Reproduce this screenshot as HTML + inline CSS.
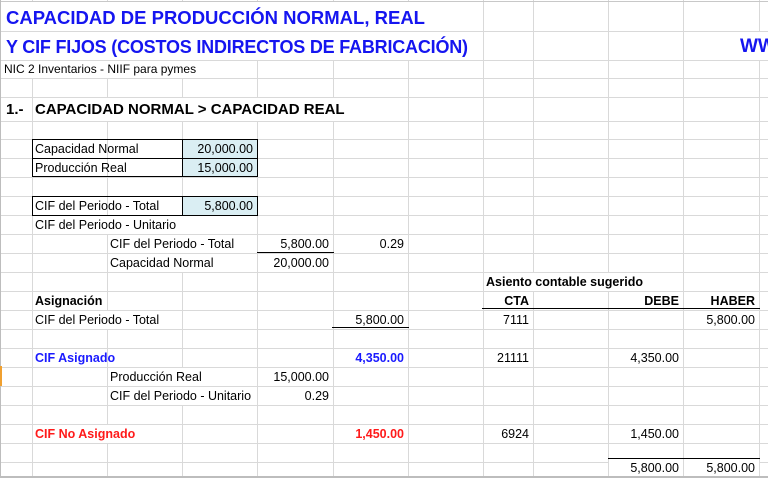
<!DOCTYPE html>
<html><head><meta charset="utf-8"><style>
*{margin:0;padding:0;box-sizing:border-box}
body{width:768px;height:478px;overflow:hidden;background:#fff;position:relative;font-family:"Liberation Sans",sans-serif;font-size:12.5px;color:#000}
.v{position:absolute;top:0;width:1px;height:478px;background:#d9d9d9}
.h{position:absolute;left:0;height:1px;width:768px;background:#d9d9d9}
.t{position:absolute;height:18px;line-height:19px;white-space:nowrap;padding:0 2px;background:#fff}
.r{text-align:right;padding-right:4px}
.b{font-weight:bold}
.k{position:absolute;background:#000}
</style></head><body>
<div class="v" style="left:32px"></div><div class="v" style="left:107px"></div><div class="v" style="left:182px"></div><div class="v" style="left:257px"></div><div class="v" style="left:333px"></div><div class="v" style="left:408px"></div><div class="v" style="left:483px"></div><div class="v" style="left:533px"></div><div class="v" style="left:608px"></div><div class="v" style="left:683px"></div><div class="v" style="left:759px"></div>
<div class="h" style="top:1px;background:#c8c8c8"></div>
<div class="h" style="top:31px"></div><div class="h" style="top:60px"></div><div class="h" style="top:78px"></div><div class="h" style="top:97px"></div><div class="h" style="top:121px"></div>
<div class="h" style="top:139px"></div><div class="h" style="top:158px"></div><div class="h" style="top:177px"></div><div class="h" style="top:196px"></div><div class="h" style="top:215px"></div><div class="h" style="top:234px"></div><div class="h" style="top:253px"></div><div class="h" style="top:272px"></div><div class="h" style="top:291px"></div><div class="h" style="top:310px"></div><div class="h" style="top:329px"></div><div class="h" style="top:348px"></div><div class="h" style="top:367px"></div><div class="h" style="top:386px"></div><div class="h" style="top:405px"></div><div class="h" style="top:424px"></div><div class="h" style="top:443px"></div><div class="h" style="top:462px"></div>
<div class="h" style="top:476px;height:2px;background:#bdbdbd"></div>
<div style="position:absolute;left:0;top:0;width:1px;height:478px;background:#bdbdbd"></div>
<div style="position:absolute;left:0;top:366px;width:2px;height:20px;background:#f0a030"></div>

<div class="t b" style="left:1px;top:2px;width:481px;height:29px;line-height:32px;font-size:18.5px;padding-left:5px;color:#1515f0">CAPACIDAD DE PRODUCCIÓN NORMAL, REAL</div>
<div class="t b" style="left:1px;top:32px;width:481px;height:28px;line-height:30px;font-size:18px;letter-spacing:-0.2px;padding-left:5px;color:#1515f0">Y CIF FIJOS (COSTOS INDIRECTOS DE FABRICACIÓN)</div>
<div class="t b" style="left:738px;top:32px;width:30px;height:28px;line-height:30px;font-size:19px;color:#1515f0">WW</div>
<div class="t" style="left:1px;top:61px;width:256px;height:17px;line-height:17px;font-size:12px;padding-left:3px">NIC 2 Inventarios - NIIF para pymes</div>
<div class="t b" style="left:1px;top:98px;width:31px;height:23px;line-height:24px;font-size:15px;padding-left:5px">1.-</div>
<div class="t b" style="left:33px;top:98px;width:374px;height:23px;line-height:24px;font-size:15px">CAPACIDAD NORMAL &gt; CAPACIDAD REAL</div>

<div style="position:absolute;left:183px;top:140px;width:74px;height:37px;background:#daeef3"></div>
<div style="position:absolute;left:183px;top:197px;width:74px;height:18px;background:#daeef3"></div>
<div class="t" style="left:33px;top:140px;width:149px;background:none">Capacidad Normal</div>
<div class="t r" style="left:183px;top:140px;width:74px;background:none">20,000.00</div>
<div class="t" style="left:33px;top:159px;width:149px;background:none">Producción Real</div>
<div class="t r" style="left:183px;top:159px;width:74px;background:none">15,000.00</div>
<div class="t" style="left:33px;top:197px;width:149px;background:none">CIF del Periodo - Total</div>
<div class="t r" style="left:183px;top:197px;width:74px;background:none">5,800.00</div>
<div class="k" style="left:32px;top:139px;width:226px;height:1px"></div>
<div class="k" style="left:32px;top:158px;width:226px;height:1px"></div>
<div class="k" style="left:32px;top:176px;width:226px;height:1px"></div>
<div class="k" style="left:32px;top:139px;width:1px;height:38px"></div>
<div class="k" style="left:182px;top:139px;width:1px;height:38px"></div>
<div class="k" style="left:257px;top:139px;width:1px;height:38px"></div>
<div class="k" style="left:32px;top:196px;width:226px;height:1px"></div>
<div class="k" style="left:32px;top:215px;width:226px;height:1px"></div>
<div class="k" style="left:32px;top:196px;width:1px;height:20px"></div>
<div class="k" style="left:182px;top:196px;width:1px;height:20px"></div>
<div class="k" style="left:257px;top:196px;width:1px;height:20px"></div>

<div class="t" style="left:33px;top:216px;width:224px">CIF del Periodo - Unitario</div>
<div class="t" style="left:108px;top:235px;width:149px">CIF del Periodo - Total</div>
<div class="t r" style="left:258px;top:235px;width:75px">5,800.00</div>
<div class="t r" style="left:334px;top:235px;width:74px">0.29</div>
<div class="k" style="left:257px;top:252px;width:77px;height:1px"></div>
<div class="t" style="left:108px;top:254px;width:149px">Capacidad Normal</div>
<div class="t r" style="left:258px;top:254px;width:75px">20,000.00</div>

<div class="t b" style="left:484px;top:273px;width:199px">Asiento contable sugerido</div>
<div class="t b" style="left:33px;top:292px;width:74px">Asignación</div>
<div class="t b r" style="left:484px;top:292px;width:49px">CTA</div>
<div class="t b r" style="left:609px;top:292px;width:74px">DEBE</div>
<div class="t b r" style="left:684px;top:292px;width:75px">HABER</div>
<div class="k" style="left:482px;top:308px;width:278px;height:1px"></div>

<div class="t" style="left:33px;top:311px;width:149px">CIF del Periodo - Total</div>
<div class="t r" style="left:334px;top:311px;width:74px">5,800.00</div>
<div class="k" style="left:332px;top:327px;width:77px;height:1px"></div>
<div class="t r" style="left:484px;top:311px;width:49px">7111</div>
<div class="t r" style="left:684px;top:311px;width:75px">5,800.00</div>

<div class="t b" style="left:33px;top:349px;width:74px;color:#1a1aff">CIF Asignado</div>
<div class="t b r" style="left:334px;top:349px;width:74px;color:#1a1aff">4,350.00</div>
<div class="t r" style="left:484px;top:349px;width:49px">21111</div>
<div class="t r" style="left:609px;top:349px;width:74px">4,350.00</div>

<div class="t" style="left:108px;top:368px;width:149px">Producción Real</div>
<div class="t r" style="left:258px;top:368px;width:75px">15,000.00</div>
<div class="t" style="left:108px;top:387px;width:149px">CIF del Periodo - Unitario</div>
<div class="t r" style="left:258px;top:387px;width:75px">0.29</div>

<div class="t b" style="left:33px;top:425px;width:149px;color:#ff1a1a">CIF No Asignado</div>
<div class="t b r" style="left:334px;top:425px;width:74px;color:#ff1a1a">1,450.00</div>
<div class="t r" style="left:484px;top:425px;width:49px">6924</div>
<div class="t r" style="left:609px;top:425px;width:74px">1,450.00</div>

<div class="k" style="left:608px;top:458px;width:152px;height:1px"></div>
<div class="t r" style="left:609px;top:459px;width:74px;height:17px">5,800.00</div>
<div class="t r" style="left:684px;top:459px;width:75px;height:17px">5,800.00</div>
</body></html>
